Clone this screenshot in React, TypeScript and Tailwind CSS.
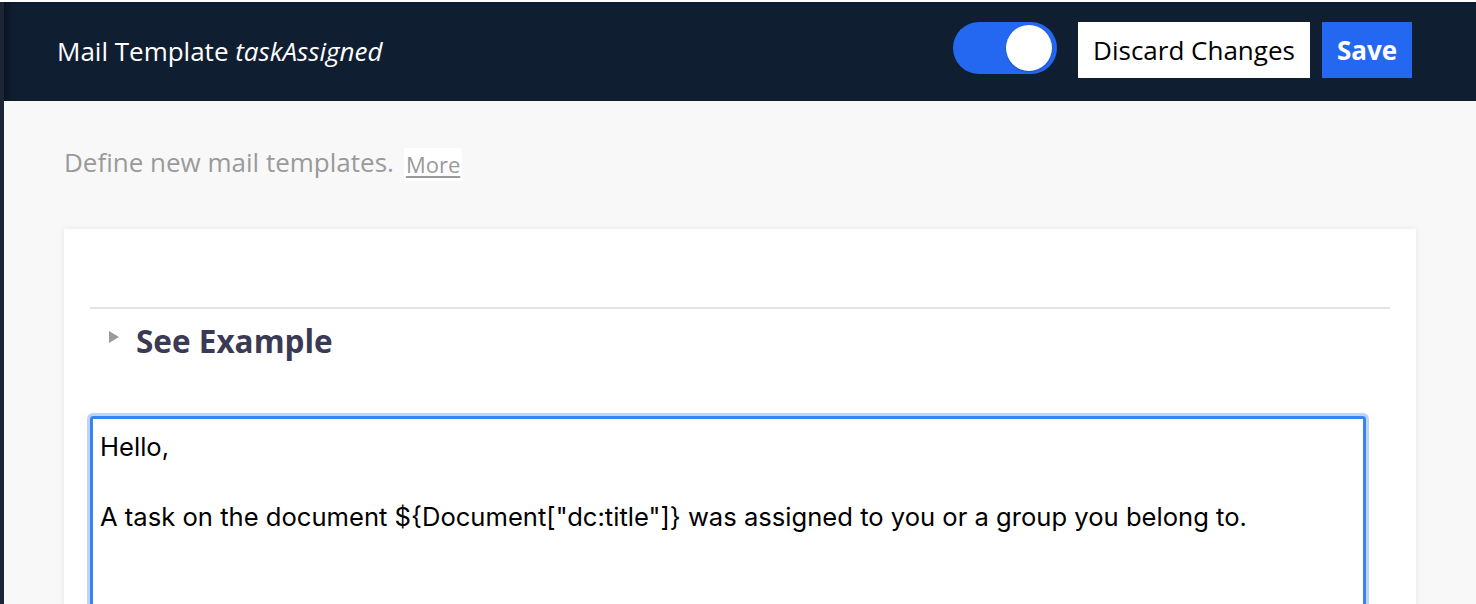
import React, { useState } from "react";

const body = `Hello,

A task on the document \${Document["dc:title"]} was assigned to you or a group you belong to.
`;

function Toggle({ on, onChange }: { on: boolean; onChange: (v: boolean) => void }) {
  return (
    <button
      onClick={() => onChange(!on)}
      className={
        "relative h-[52px] w-[104px] rounded-full transition-colors " +
        (on ? "bg-[#2468f2]" : "bg-gray-400")
      }
    >
      <span
        className={
          "absolute top-[3px] h-[46px] w-[46px] rounded-full bg-white shadow-[0_1px_2px_rgba(0,0,0,0.25)] transition-all " +
          (on ? "left-[53px]" : "left-[3px]")
        }
      />
    </button>
  );
}

export default function App() {
  const [enabled, setEnabled] = useState(true);
  const [open, setOpen] = useState(false);
  const [text, setText] = useState(body);

  return (
    <div className="flex h-[604px] w-full flex-col overflow-hidden bg-white font-['Open_Sans',sans-serif]">
      <div className="h-[2px] shrink-0 bg-white" />
      <div className="flex min-h-0 flex-1">
        {/* left rail */}
        <div className="w-[4px] shrink-0 bg-[#1c2535]" />

        <div className="flex min-w-0 flex-1 flex-col">
          {/* Header */}
          <header className="flex h-[99px] shrink-0 items-center justify-between bg-[#101e31] pl-[53px] pr-[64px] shadow-[inset_8px_0_8px_-6px_rgba(0,0,0,0.5)]">
            <h1 className="text-[26px] text-white">
              Mail Template <em>taskAssigned</em>
            </h1>
            <div className="mb-[3px] flex items-start">
              <Toggle on={enabled} onChange={setEnabled} />
              <button className="ml-[21px] h-[56px] w-[232px] bg-white text-[26px] text-black">
                Discard Changes
              </button>
              <button className="ml-[12px] h-[56px] w-[90px] bg-[#2468f2] text-[26px] font-bold text-white">
                Save
              </button>
            </div>
          </header>

          {/* Content */}
          <main className="min-h-0 flex-1 bg-[#f8f8f8] pl-[60px] pr-[60px]">
            <div className="flex h-[128px] items-start pt-[42px]">
              <p className="text-[26px] text-[#9a9a9a]">Define new mail templates.</p>
              <a className="ml-[10px] mt-[5px] bg-white px-[2px] text-[22px] text-[#9a9a9a] underline underline-offset-[3px]">
                More
              </a>
            </div>

            <section className="bg-white px-[26px] pt-[78px] shadow-[0_0_6px_rgba(0,0,0,0.08)]">
              <div className="border-t-2 border-[#e4e4e8]" />
              <button
                onClick={() => setOpen(!open)}
                className="flex items-center gap-[16px] pl-[18px] pt-[8px]"
              >
                <svg width="12" height="14" viewBox="0 0 12 14" className={"mb-[8px] " + (open ? "rotate-90" : "")}>
                  <path d="M1 1 L11 7 L1 13 Z" fill="#9b9b9b" />
                </svg>
                <span className="text-[31.5px] font-bold text-[#3a3a55]">See Example</span>
              </button>

              <div className="mt-[52px] w-[1276px]">
                <textarea
                  value={text}
                  onChange={(e) => setText(e.target.value)}
                  className="block h-[260px] w-full resize-none rounded-[3px] border-[3px] border-[#3b82f6] px-[7px] py-[10px] font-['Inter',sans-serif] text-[25.6px] leading-[35px] text-black outline-none ring-[3px] ring-[#bcd6fb]"
                />
              </div>
            </section>
          </main>
        </div>
      </div>
    </div>
  );
}
